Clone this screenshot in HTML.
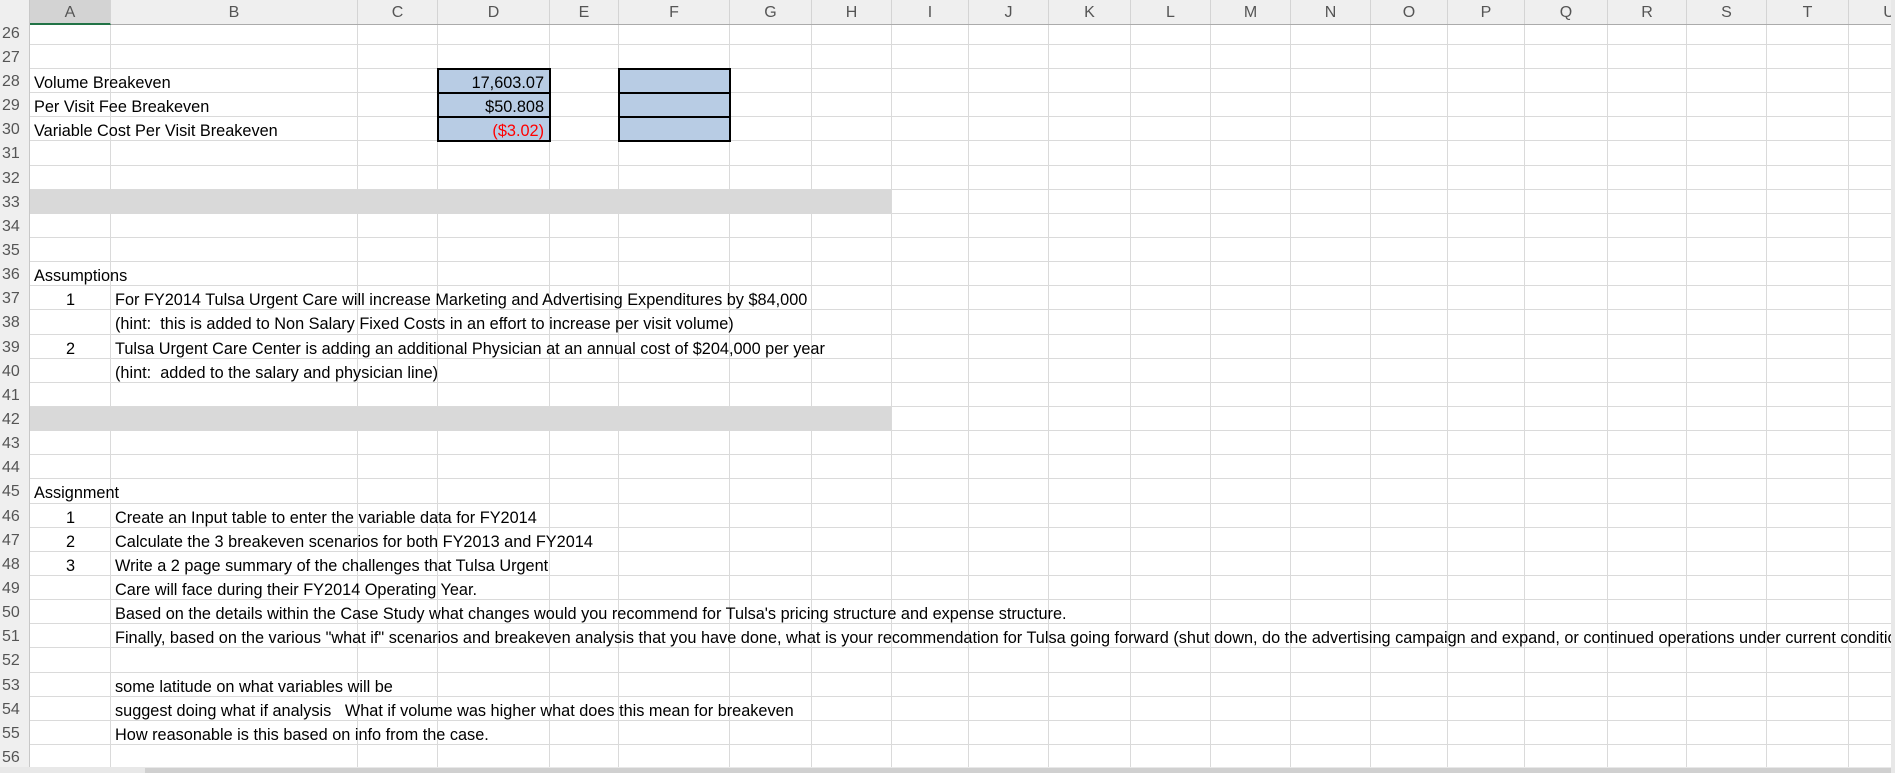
<!DOCTYPE html>
<html><head><meta charset="utf-8"><style>
html,body{margin:0;padding:0;width:1895px;height:773px;overflow:hidden;background:#fff;font-family:"Liberation Sans",Arial,sans-serif;}
#g{position:absolute;left:0;top:0;width:1895px;height:773px;overflow:hidden;}
.vl{position:absolute;width:1px;background:#dadada;}
.hl{position:absolute;height:1px;background:#dadada;}
.t{position:absolute;font-size:16.3px;color:#000;white-space:nowrap;line-height:24px;margin-top:2px;}
.hdr{position:absolute;left:0;top:0;width:1895px;height:25px;background:#efefef;border-bottom:1px solid #ababab;box-sizing:border-box;}
.ch{position:absolute;top:0;height:24px;line-height:26px;text-align:center;font-size:16px;color:#555;border-right:1px solid #d4d4d4;box-sizing:border-box;}
.rn{position:absolute;left:0;width:30px;background:#efefef;border-right:1px solid #c8c8c8;box-sizing:border-box;font-size:16px;color:#555;padding-left:2px;line-height:26px;}
.box{position:absolute;background:#b8cce4;border:2px solid #000;box-sizing:border-box;}
</style></head><body><div id="g"></div>
<script>
(function(){
var cols=[30,111,358,438,550,619,730,812,892,969,1049,1131,1211,1291,1371,1448,1525,1608,1687,1767,1849,1930];
var names="ABCDEFGHIJKLMNOPQRSTU".split("");
function rt(r){return 69+(r-28)*24.14;}
var h='';
for(var i=1;i<cols.length;i++){h+='<div class="vl" style="left:'+(cols[i]-1)+'px;top:25px;height:742px"></div>';}
for(var r=26;r<=56;r++){var y=Math.round(rt(r+1))-1;h+='<div class="hl" style="left:30px;width:1865px;top:'+y+'px"></div>';}
[33,42].forEach(function(r){h+='<div style="position:absolute;left:30px;width:861px;top:'+Math.round(rt(r))+'px;height:'+(Math.round(rt(r+1))-Math.round(rt(r)))+'px;background:#d9d9d9"></div>';});
var bh=Math.round(rt(31))-Math.round(rt(28))+2;
h+='<div class="box" style="left:437px;top:'+(Math.round(rt(28))-1)+'px;width:114px;height:'+bh+'px"></div>';
h+='<div class="box" style="left:618px;top:'+(Math.round(rt(28))-1)+'px;width:113px;height:'+bh+'px"></div>';
[29,30].forEach(function(r){var y=Math.round(rt(r))-1;h+='<div style="position:absolute;left:437px;width:114px;top:'+y+'px;height:2px;background:#000"></div><div style="position:absolute;left:618px;width:113px;top:'+y+'px;height:2px;background:#000"></div>';});
function t(r,x,s,extra){h+='<div class="t" style="left:'+x+'px;top:'+Math.round(rt(r))+'px;'+(extra||'')+'">'+s+'</div>';}
t(28,34,'Volume Breakeven');t(29,34,'Per Visit Fee Breakeven');t(30,34,'Variable Cost Per Visit Breakeven');
h+='<div class="t" style="left:440px;width:104px;text-align:right;top:'+Math.round(rt(28))+'px">17,603.07</div>';
h+='<div class="t" style="left:440px;width:104px;text-align:right;top:'+Math.round(rt(29))+'px">$50.808</div>';
h+='<div class="t" style="left:440px;width:104px;text-align:right;color:#ff0000;top:'+Math.round(rt(30))+'px">($3.02)</div>';
t(36,34,'Assumptions');
t(37,66,'1');t(37,115,'For FY2014 Tulsa Urgent Care will increase Marketing and Advertising Expenditures by $84,000');
t(38,115,'(hint:&nbsp; this is added to Non Salary Fixed Costs in an effort to increase per visit volume)');
t(39,66,'2');t(39,115,'Tulsa Urgent Care Center is adding an additional Physician at an annual cost of $204,000 per year');
t(40,115,'(hint:&nbsp; added to the salary and physician line)');
t(45,34,'Assignment');
t(46,66,'1');t(46,115,'Create an Input table to enter the variable data for FY2014');
t(47,66,'2');t(47,115,'Calculate the 3 breakeven scenarios for both FY2013 and FY2014');
t(48,66,'3');t(48,115,'Write a 2 page summary of the challenges that Tulsa Urgent');
t(49,115,'Care will face during their FY2014 Operating Year.');
t(50,115,'Based on the details within the Case Study what changes would you recommend for Tulsa\'s pricing structure and expense structure.');
t(51,115,'Finally, based on the various "what if" scenarios and breakeven analysis that you have done, what is your recommendation for Tulsa going forward (shut down, do the advertising campaign and expand, or continued operations under current conditions)');
t(53,115,'some latitude on what variables will be');
t(54,115,'suggest doing what if analysis&nbsp;&nbsp; What if volume was higher what does this mean for breakeven');
t(55,115,'How reasonable is this based on info from the case.');
for(var r=26;r<=56;r++){var y=Math.round(rt(r)),y2=Math.round(rt(r+1));h+='<div class="rn" style="top:'+y+'px;height:'+(y2-y)+'px">'+r+'</div>';}
h+='<div class="hdr"></div>';
for(var i=0;i<names.length;i++){var bg=i==0?'background:#d3d3d3;border-bottom:2px solid #217346;height:25px;':'';h+='<div class="ch" style="left:'+cols[i]+'px;width:'+(cols[i+1]-cols[i])+'px;'+bg+'">'+names[i]+'</div>';}
h+='<div style="position:absolute;left:0;top:0;width:30px;height:25px;background:#efefef;border-right:1px solid #c8c8c8;box-sizing:border-box"></div>';
h+='<div style="position:absolute;left:1891px;top:0;width:4px;height:773px;background:#e8e8e8"></div>';
h+='<div style="position:absolute;left:0;top:767px;width:1895px;height:6px;background:#e8e8e8"></div>';
h+='<div style="position:absolute;left:145px;top:768px;width:1746px;height:5px;background:#d0d0d0"></div>';
document.getElementById('g').innerHTML=h;
})();
</script></body></html>
